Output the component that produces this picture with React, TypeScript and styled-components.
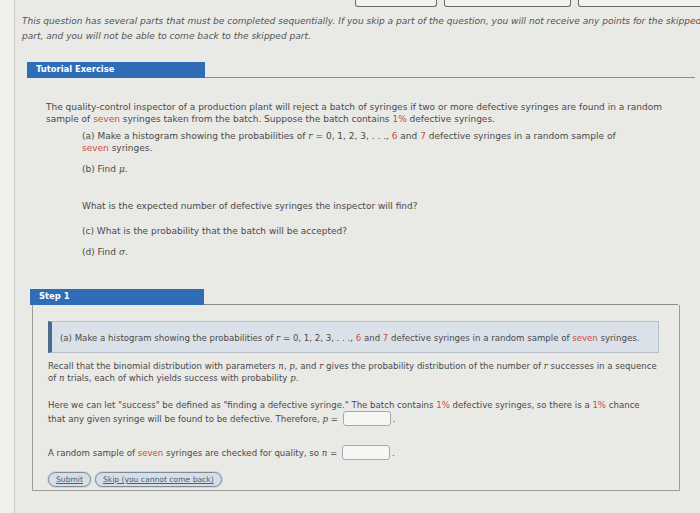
import styled, { createGlobalStyle } from 'styled-components';

const GlobalStyle = createGlobalStyle`
  html, body {
    margin: 0;
    padding: 0;
    background: #e9e9e6;
  }
  body {
    font-family: "DejaVu Sans", Verdana, sans-serif;
    font-size: 8.6px;
    color: #4a4a4a;
  }
`;

const Page = styled.div`
  width: 700px;
  height: 513px;
  overflow: hidden;
  box-sizing: border-box;
  border-left: 14px solid #efefec;
  box-shadow: inset 1px 0 0 #c9c9c6;
  background: #e9e9e6;
`;

const TabRow = styled.div`
  display: flex;
  justify-content: flex-end;
  gap: 7px;
  height: 8px;
  margin-right: -4px;
`;

const Tab = styled.div<{ $w: number }>`
  flex: 0 0 auto;
  width: ${(p) => p.$w}px;
  height: 7px;
  box-sizing: border-box;
  border: 1.5px solid #6a6a6a;
  border-top: none;
  border-radius: 0 0 3px 3px;
  background: #f2f2f0;
`;

const Intro = styled.p`
  margin: 6px 0 0 8px;
  font-size: 9.05px;
  font-style: italic;
  line-height: 15px;
  white-space: nowrap;
  color: #555;
`;

const Section = styled.section`
  margin: 18px 0 0 13px;
  font-size: 9px;
`;

const HeaderRow = styled.div`
  display: flex;
  align-items: flex-end;
`;

const HeaderBar = styled.div<{ $w?: number }>`
  width: ${(p) => p.$w ?? 178}px;
  height: 16px;
  box-sizing: border-box;
  padding: 2px 0 0 9px;
  background: #2f6db7;
  color: #fff;
  font-weight: bold;
  font-size: 8.4px;
`;

const HeaderLine = styled.div<{ $right?: number }>`
  flex: 1;
  height: 1.5px;
  background: #8c8c8c;
  margin-right: ${(p) => p.$right ?? 5}px;
`;

const Para = styled.p<{ $indent?: number; $top?: number }>`
  margin: ${(p) => p.$top ?? 0}px 0 0 ${(p) => p.$indent ?? 0}px;
  line-height: 12px;
`;

const Red = styled.span`
  color: #c94c4c;
`;

const Var = styled.i`
  font-family: "DejaVu Serif", serif;
`;

const StepSection = styled.section`
  margin: 31px 0 0 16px;
`;

const StepPanel = styled.div`
  margin: 0 20px 0 2px;
  border: 1px solid #9d9d9a;
  border-top: none;
  padding: 16px 18px 6px 15px;
  height: 186px;
  box-sizing: border-box;
`;

const Highlight = styled.div`
  background: #dbe1e8;
  border: 1px solid #b5bec9;
  border-left: 4px solid #4a6a92;
  padding: 10px 8px 8px 8px;
  line-height: 12px;
  margin-right: 2px;
`;

const Blank = styled.span`
  display: inline-block;
  width: 46px;
  height: 13px;
  vertical-align: -4px;
  border: 1px solid #a9a9a9;
  border-radius: 3px;
  background: #f6f6f4;
  margin: 0 2px;
`;

const ButtonRow = styled.div`
  display: flex;
  gap: 4px;
  margin-top: 12px;
`;

const Btn = styled.button`
  font-family: "DejaVu Sans", Verdana, sans-serif;
  font-size: 7.6px;
  color: #3f5f7f;
  text-decoration: underline;
  height: 15px;
  padding: 0 7px;
  border: 1.5px solid #7c8c9c;
  border-radius: 8px;
  background: #d7dee5;
  box-shadow: 0 0 0 1px #cfd6dd;
`;

export default function App() {
  return (
    <>
      <GlobalStyle />
      <Page>
        <TabRow>
          <Tab $w={82} />
          <Tab $w={127} />
          <Tab $w={126} />
        </TabRow>
        <Intro>
          This question has several parts that must be completed sequentially. If you skip a part of the question, you will not receive any points for the skipped
          <br />
          part, and you will not be able to come back to the skipped part.
        </Intro>

        <Section>
          <HeaderRow>
            <HeaderBar>Tutorial Exercise</HeaderBar>
            <HeaderLine />
          </HeaderRow>
          <Para $indent={19} $top={23}>
            The quality-control inspector of a production plant will reject a batch of syringes if two or more defective syringes are found in a random
            <br />
            sample of <Red>seven</Red> syringes taken from the batch. Suppose the batch contains <Red>1%</Red> defective syringes.
          </Para>
          <Para $indent={55} $top={5}>
            (a) Make a histogram showing the probabilities of <Var>r</Var> = 0, 1, 2, 3, . . ., <Red>6</Red> and <Red>7</Red> defective syringes in a random sample of
            <br />
            <Red>seven</Red> syringes.
          </Para>
          <Para $indent={55} $top={9}>
            (b) Find <Var>μ</Var>.
          </Para>
          <Para $indent={55} $top={25}>
            What is the expected number of defective syringes the inspector will find?
          </Para>
          <Para $indent={55} $top={13}>
            (c) What is the probability that the batch will be accepted?
          </Para>
          <Para $indent={55} $top={9}>
            (d) Find <Var>σ</Var>.
          </Para>
        </Section>

        <StepSection>
          <HeaderRow>
            <HeaderBar $w={174}>Step 1</HeaderBar>
            <HeaderLine $right={22} />
          </HeaderRow>
          <StepPanel>
            <Highlight>
              (a) Make a histogram showing the probabilities of <Var>r</Var> = 0, 1, 2, 3, . . ., <Red>6</Red> and <Red>7</Red> defective syringes in a random sample of <Red>seven</Red> syringes.
            </Highlight>
            <Para $top={7}>
              Recall that the binomial distribution with parameters <Var>n</Var>, <Var>p</Var>, and <Var>r</Var> gives the probability distribution of the number of <Var>r</Var> successes in a sequence
              <br />
              of <Var>n</Var> trials, each of which yields success with probability <Var>p</Var>.
            </Para>
            <Para $top={15}>
              Here we can let "success" be defined as "finding a defective syringe." The batch contains <Red>1%</Red> defective syringes, so there is a <Red>1%</Red> chance
              <br />
              that any given syringe will be found to be defective. Therefore, <Var>p</Var> = <Blank />.
            </Para>
            <Para $top={19}>
              A random sample of <Red>seven</Red> syringes are checked for quality, so <Var>n</Var> = <Blank />.
            </Para>
            <ButtonRow>
              <Btn>Submit</Btn>
              <Btn>Skip (you cannot come back)</Btn>
            </ButtonRow>
          </StepPanel>
        </StepSection>
      </Page>
    </>
  );
}
